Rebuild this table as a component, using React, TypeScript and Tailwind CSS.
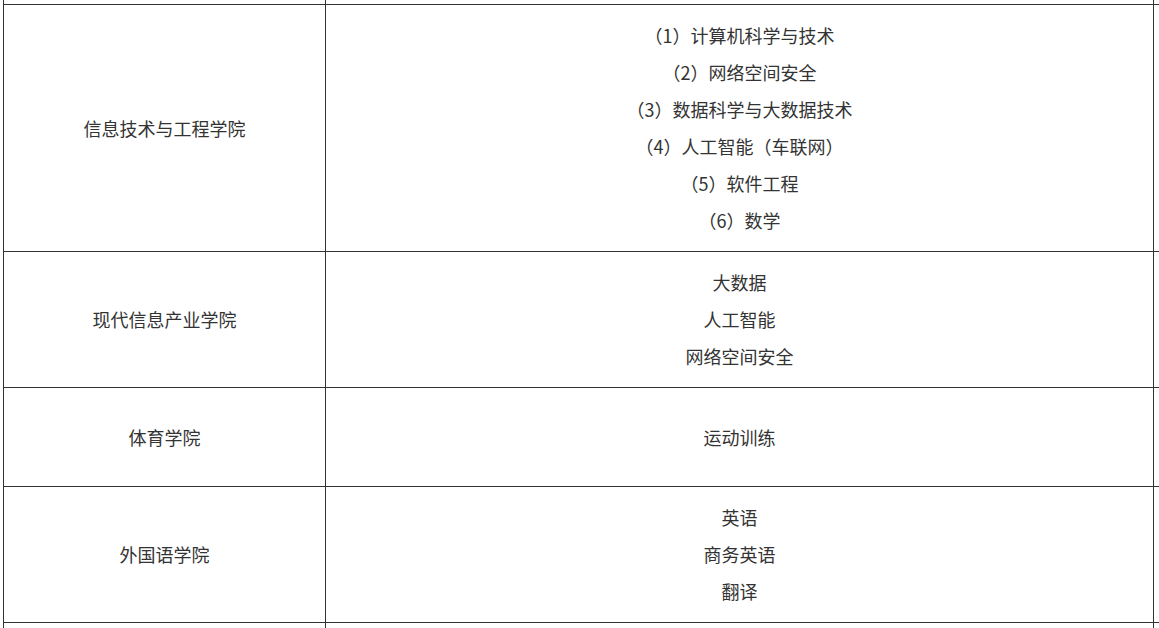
const rows: { college: string; majors: string[]; h: string }[] = [
  {
    college: "信息技术与工程学院",
    majors: [
      "（1）计算机科学与技术",
      "（2）网络空间安全",
      "（3）数据科学与大数据技术",
      "（4）人工智能（车联网）",
      "（5）软件工程",
      "（6）数学",
    ],
    h: "h-[247px]",
  },
  { college: "现代信息产业学院", majors: ["大数据", "人工智能", "网络空间安全"], h: "h-[136px]" },
  { college: "体育学院", majors: ["运动训练"], h: "h-[99px]" },
  { college: "外国语学院", majors: ["英语", "商务英语", "翻译"], h: "h-[136px]" },
];

const cell = "border-r border-b border-[#333] flex flex-col items-center justify-center";

export default function App() {
  return (
    <div
      className="w-[1159px] h-[628px] overflow-hidden bg-white pl-[3px] text-[18px] leading-[37px] text-[#333]"
      style={{ fontFamily: '"Noto Sans CJK SC", "Noto Sans", sans-serif' }}
    >
      <div className="grid grid-cols-[323px_828px_200px] w-[1351px]">
        <div className={`${cell} border-l h-[5px]`} />
        <div className={`${cell} h-[5px]`} />
        <div className={`${cell} h-[5px]`} />
        {rows.map((row) => (
          <div key={row.college} className="contents">
            <div className={`${cell} border-l ${row.h}`}>{row.college}</div>
            <div className={`${cell} ${row.h}`}>
              {row.majors.map((m) => (
                <div key={m}>{m}</div>
              ))}
            </div>
            <div className={`${cell} ${row.h}`} />
          </div>
        ))}
        <div className={`${cell} border-l h-[60px]`} />
        <div className={`${cell} h-[60px]`} />
        <div className={`${cell} h-[60px]`} />
      </div>
    </div>
  );
}
